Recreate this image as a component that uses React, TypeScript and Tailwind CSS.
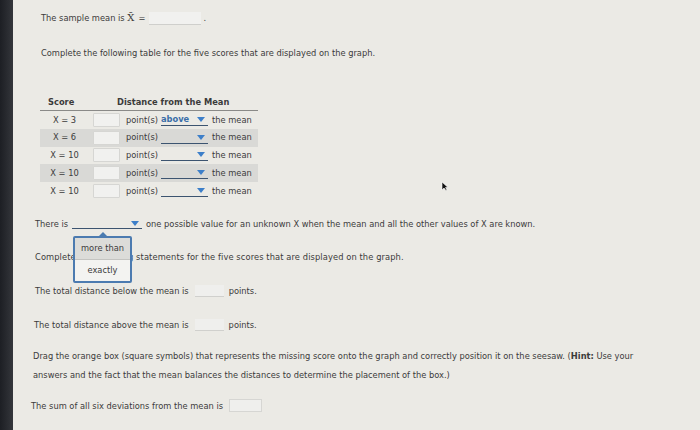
import React from 'react';

const rows = [
  { score: 'X = 3', dir: 'above', shade: false },
  { score: 'X = 6', dir: '', shade: true },
  { score: 'X = 10', dir: '', shade: false },
  { score: 'X = 10', dir: '', shade: true },
  { score: 'X = 10', dir: '', shade: false },
];

function Caret() {
  return (
    <svg width="8" height="5" viewBox="0 0 8 5" className="shrink-0">
      <path d="M0 0 L8 0 L4 5 Z" fill="#3d7fc9" />
    </svg>
  );
}

function Blank({ w, h = 12 }: { w: number; h?: number }) {
  return (
    <span
      className="inline-block bg-[#f1f1ef] border border-[#d6d6d3] rounded-[1px] align-middle"
      style={{ width: w, height: h }}
    />
  );
}

export default function App() {
  return (
    <div className="flex w-[700px] h-[430px] overflow-hidden bg-[#ebeae5] font-['DejaVu_Sans',sans-serif] text-[8.3px] text-[#3b3b3b]">
      <div className="w-[13px] shrink-0 bg-gradient-to-r from-[#1d1f24] to-[#34363b]" />
      <div className="relative flex-1 flex flex-col">
        <div className="mt-[11px] ml-[28px] flex items-center h-[14px]">
          <span>The sample mean is&nbsp;</span>
          <span className="font-['DejaVu_Serif',serif] text-[10px] leading-none">X̄</span>
          <span className="mx-[4px]">=</span>
          <span className="inline-block w-[52px] h-[13px] bg-[#f1f1ef] border-b border-[#cfcfcc]" />
          <span className="ml-[2px]">.</span>
        </div>

        <div className="mt-[21px] ml-[28px] h-[14px] flex items-center">
          Complete the following table for the five scores that are displayed on the graph.
        </div>

        <div className="mt-[35px] ml-[27px] w-[218px]">
          <div className="flex items-end h-[16px] pb-[2px] border-b border-[#8a8a88] font-bold">
            <span className="ml-[8px] w-[69px]">Score</span>
            <span>Distance from the Mean</span>
          </div>
          {rows.map((r, i) => (
            <div
              key={i}
              className={`flex items-center h-[17.8px] ${r.shade ? 'bg-[#d9d9d6]' : ''}`}
            >
              <span className="w-[49px] text-center">{r.score}</span>
              <span className="ml-[4px]">
                <Blank w={27} h={14} />
              </span>
              <span className="ml-[6px]">point(s)</span>
              <span className="ml-[3px] w-[47px] h-[12px] flex items-center justify-end border-b border-[#3c5470] pr-[3px]">
                {r.dir && <span className="mr-auto font-bold text-[#3a6ea8]">{r.dir}</span>}
                <Caret />
              </span>
              <span className="ml-[4px]">the mean</span>
            </div>
          ))}
        </div>

        <div className="relative mt-[17px] ml-[22px] h-[14px] flex items-center">
          <span>There is</span>
          <span className="ml-[4px] w-[70px] h-[11px] flex items-center justify-end border-b border-[#3c5470] pr-[3px]">
            <Caret />
          </span>
          <span className="ml-[4px]">
            one possible value for an unknown X when the mean and all the other values of X are known.
          </span>

          <div className="absolute left-[38px] top-[15px] z-10 w-[59px] flex flex-col items-center">
            <svg width="10" height="5" viewBox="0 0 10 5" className="-mb-[1px]">
              <path d="M0 5 L5 0 L10 5 Z" fill="#4a7bb0" />
            </svg>
            <div className="w-full border-2 border-[#4c7bb0] rounded-[2px] bg-[#f3f3f1] overflow-hidden">
              <div className="h-[22px] flex items-center justify-center bg-[#dcdcd9] border-b border-[#c4c4c1]">more than</div>
              <div className="h-[21px] flex items-center justify-center">exactly</div>
            </div>
          </div>
        </div>

        <div className="mt-[19px] ml-[22px] h-[14px] flex items-center tracking-[0.1px]">
          Complete the following statements for the five scores that are displayed on the graph.
        </div>

        <div className="mt-[20px] ml-[22px] h-[14px] flex items-center">
          <span>The total distance below the mean is</span>
          <span className="ml-[6px] inline-block w-[29px] h-[12px] bg-[#efefed] border-b border-[#d0d0cd]" />
          <span className="ml-[5px]">points.</span>
        </div>

        <div className="mt-[20px] ml-[21px] h-[14px] flex items-center">
          <span>The total distance above the mean is</span>
          <span className="ml-[6px] inline-block w-[29px] h-[12px] bg-[#efefed] border-b border-[#d0d0cd]" />
          <span className="ml-[5px]">points.</span>
        </div>

        <p className="mt-[15px] ml-[20px] w-[625px] leading-[19px]">
          Drag the orange box (square symbols) that represents the missing score onto the graph and correctly position it on the seesaw. (<b>Hint:</b> Use your answers and the fact that the mean balances the distances to determine the placement of the box.)
        </p>

        <div className="mt-[14px] ml-[18px] h-[14px] flex items-center">
          <span>The sum of all six deviations from the mean is</span>
          <span className="ml-[6px] inline-block w-[33px] h-[13px] bg-[#efefed] border border-[#d6d6d3]" />
        </div>

        <svg width="8" height="10" viewBox="0 0 8 10" className="absolute left-[428px] top-[181px]">
          <path d="M1 1 L1 9 L3 7 L5 9.5 L6 9 L4.5 6.5 L7 6.5 Z" fill="#111" stroke="#fff" strokeWidth="0.6" />
        </svg>
      </div>
    </div>
  );
}
